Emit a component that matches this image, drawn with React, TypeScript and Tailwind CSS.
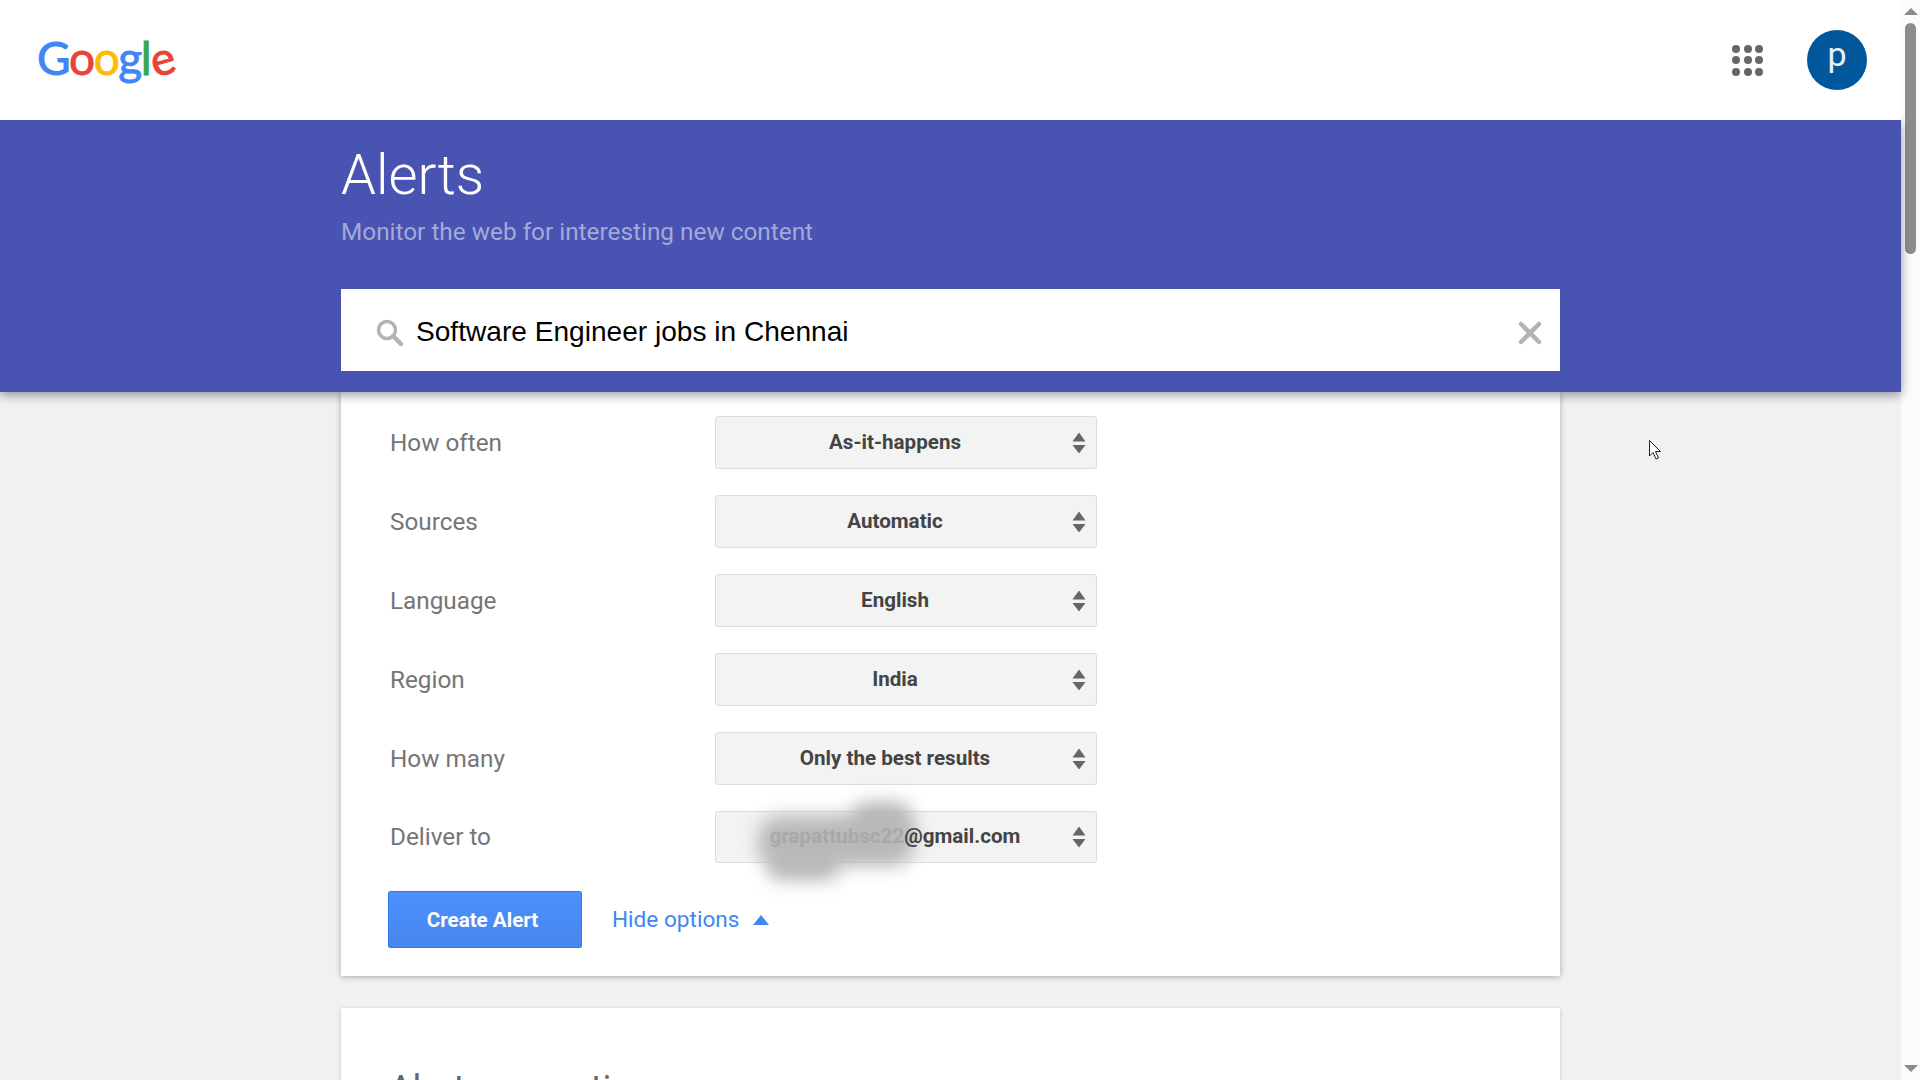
import React from "react";

const rows = [
  { label: "How often", value: "As-it-happens" },
  { label: "Sources", value: "Automatic" },
  { label: "Language", value: "English" },
  { label: "Region", value: "India" },
  { label: "How many", value: "Only the best results" },
];

const Arrows = () => (
  <svg width="14" height="21" viewBox="0 0 14 21" className="absolute right-[10px] top-1/2 z-10 -translate-y-1/2">
    <path d="M7 0 L13.5 9 H0.5 Z" fill="#666" />
    <path d="M7 21 L13.5 12.5 H0.5 Z" fill="#666" />
  </svg>
);

const FakeSelect = ({ children }: { children: React.ReactNode }) => (
  <div className="relative flex h-full w-[382px] items-center justify-center rounded-[3px] border border-[#dcdcdc] bg-[#f3f3f3] pb-[1px] pr-[22px] text-[20.6px] font-bold text-[#444]">
    {children}
    <Arrows />
  </div>
);

export default function App() {
  return (
    <div className="flex h-screen w-full overflow-hidden bg-[#f1f1f1] font-['Roboto',sans-serif]">
      <div className="flex min-w-0 flex-1 flex-col">
        {/* top bar */}
        <header className="relative z-20 flex h-[120px] shrink-0 items-center justify-between pl-[37px] pr-[34px] bg-white">
          <div className="pb-[5px] font-['Lato',sans-serif] text-[46px] leading-none tracking-[-1.4px] [-webkit-text-stroke:0.9px]">
            <span className="text-[#4285f4]">G</span>
            <span className="text-[#ea4335]">o</span>
            <span className="text-[#fbbc05]">o</span>
            <span className="text-[#4285f4]">g</span>
            <span className="text-[#34a853]">l</span>
            <span className="inline-block -rotate-[15deg] text-[#ea4335]">e</span>
          </div>
          <div className="flex items-center gap-[44px]">
            <div className="grid grid-cols-3 gap-x-[3.5px] gap-y-[3.5px]">
              {Array.from({ length: 9 }).map((_, i) => (
                <span key={i} className="h-[8px] w-[8px] rounded-full bg-[#65676b]" />
              ))}
            </div>
            <div className="flex h-[60px] w-[60px] items-center justify-center rounded-full bg-[#01579b] pb-[11px] text-[34px] text-[#e8f0f8]">
              p
            </div>
          </div>
        </header>

        {/* blue banner */}
        <section className="relative z-10 h-[272px] shrink-0 bg-[#4953b1] shadow-[0_3px_10px_rgba(0,0,0,0.4)]">
          <div className="mx-auto w-[1219px]">
            <h1 className="pt-[22px] text-[56px] font-light leading-[66px] text-white">Alerts</h1>
            <p className="mt-[8px] text-[24.35px] leading-[32px] text-[#a4a9d9]">Monitor the web for interesting new content</p>
            <div className="mt-[41px] flex h-[82px] items-center bg-white pl-[35px] pr-[18px] pt-[5px]">
              <svg width="27" height="27" viewBox="0 0 27 27" fill="none" stroke="#b3b3b3" className="shrink-0">
                <circle cx="11" cy="11" r="8.5" strokeWidth="3.5" />
                <path d="M17 17 L25 25" strokeWidth="4.5" strokeLinecap="round" />
              </svg>
              <span className="ml-[13px] flex-1 font-['Liberation_Sans',sans-serif] text-[28.1px] text-black">Software Engineer jobs in Chennai</span>
              <svg width="24" height="24" viewBox="0 0 24 24" stroke="#b3b3b3" strokeWidth="4.5" strokeLinecap="round">
                <path d="M3 3 L21 21 M21 3 L3 21" />
              </svg>
            </div>
          </div>
        </section>

        {/* cards */}
        <main className="mx-auto w-[1219px]">
          <div className="flex h-[584px] flex-col bg-white pl-[49px] pt-[24px] shadow-[0_1px_6px_rgba(0,0,0,0.3)]">
            <div className="flex flex-col gap-[26px]">
              {rows.map((r) => (
                <div key={r.label} className="flex h-[53px] items-center">
                  <div className="w-[325px] pt-[2px] text-[24.3px] text-[#757575]">{r.label}</div>
                  <FakeSelect>{r.value}</FakeSelect>
                </div>
              ))}
              <div className="flex h-[52px] items-center">
                <div className="w-[325px] text-[24.3px] text-[#757575]">Deliver to</div>
                <FakeSelect>
                  {/* smudge over the address */}
                  <div className="absolute left-[42px] top-[4px] h-[50px] w-[156px] rounded-[22px] bg-[#b8b8b8] blur-[9px]" />
                  <div className="absolute left-[136px] top-[-10px] h-[36px] w-[60px] rounded-[16px] bg-[#b8b8b8] blur-[9px]" />
                  <div className="absolute left-[52px] top-[38px] h-[30px] w-[70px] rounded-[12px] bg-[#b8b8b8] blur-[9px]" />
                  <span className="relative">
                    <span className="text-[#a8a8a8] blur-[0.6px]">grapattubsc22</span>
                    @gmail.com
                  </span>
                </FakeSelect>
              </div>
            </div>
            <div className="-ml-[2px] mt-[28px] flex items-center">
              <button className="h-[57px] w-[194px] rounded-[2px] border border-[#3079ed] bg-gradient-to-b from-[#4d90fe] to-[#4787ed] pr-[5px] pt-[2px] text-[20.6px] font-bold text-white">
                Create Alert
              </button>
              <span className="ml-[30px] text-[22.6px] text-[#4285f4]">Hide options</span>
              <svg width="16" height="10" viewBox="0 0 16 10" className="ml-[14px]">
                <path d="M8 0 L16 10 H0 Z" fill="#4285f4" />
              </svg>
            </div>
          </div>
          <div className="mt-[32px] h-[200px] bg-white pl-[48px] pt-[63px] shadow-[0_1px_4px_rgba(0,0,0,0.2)]">
            <div className="text-[36px] leading-none text-[#666]">Alert suggestions</div>
          </div>
        </main>
      </div>

      {/* scrollbar */}
      <aside className="relative flex w-[19px] shrink-0 flex-col items-center bg-[#fbfbfb]">
        <svg width="14" height="7" viewBox="0 0 14 7" className="mt-[8px]">
          <path d="M7 0 L14 7 H0 Z" fill="#8a8a8a" />
        </svg>
        <div className="mt-[8px] h-[231px] w-[11px] rounded-full bg-[#8c8c8c]" />
        <svg width="14" height="7" viewBox="0 0 14 7" className="mb-[8px] mt-auto">
          <path d="M7 7 L14 0 H0 Z" fill="#8a8a8a" />
        </svg>
      </aside>

      {/* mouse pointer caught in the capture */}
      <svg width="13" height="20" viewBox="0 0 13 20" className="absolute left-[1649px] top-[440px] z-30">
        <path d="M0.5 0.5 V16 L4 12.5 L7 19 L9.5 18 L6.5 11.5 H11.5 Z" fill="#fff" stroke="#222" strokeWidth="1" />
      </svg>
    </div>
  );
}
